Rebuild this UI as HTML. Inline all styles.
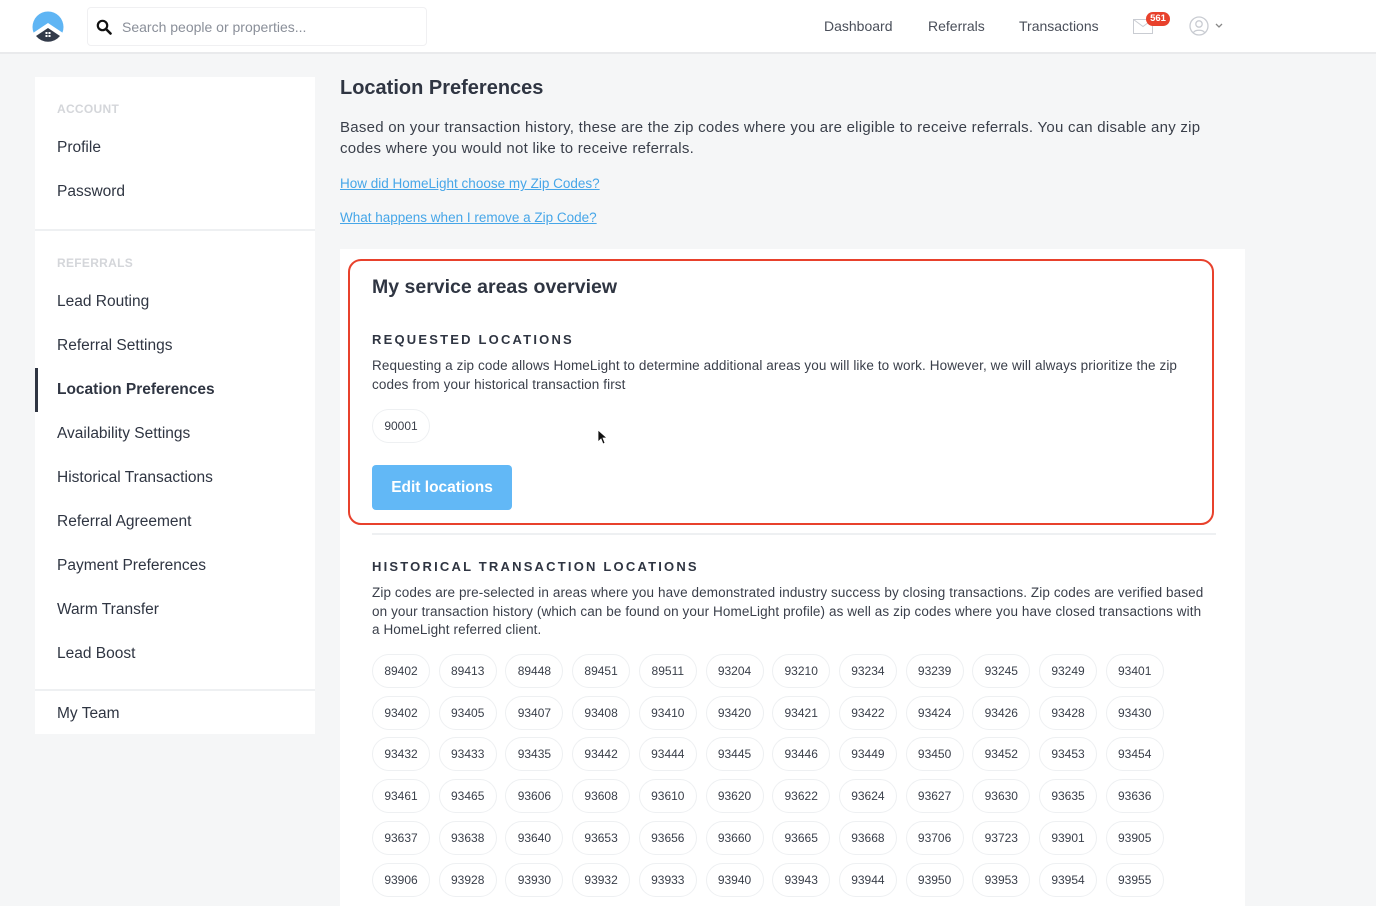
<!DOCTYPE html>
<html><head><meta charset="utf-8"><style>
*{box-sizing:border-box;margin:0;padding:0}
html,body{width:1376px;height:906px;overflow:hidden}
body{background:#f5f6f7;font-family:"Liberation Sans",sans-serif;color:#2f3542;position:relative}
.top{position:absolute;left:0;top:0;width:1376px;height:54px;background:#fff;border-bottom:2px solid #e9eaec}
.search{position:absolute;left:87px;top:7px;width:340px;height:39px;background:#fff;border:1px solid #f0f0f2;border-radius:4px}
.search span{position:absolute;left:34px;top:11px;font-size:14px;color:#8a8f99}
.nav{position:absolute;top:18px;font-size:14px;color:#4a4f5a}
.side{position:absolute;left:35px;top:77px;width:280px;height:657px;background:#fff}
.side .h{position:absolute;left:22px;font-size:12px;font-weight:bold;color:#d4d6da;letter-spacing:.3px}
.side .i{position:absolute;left:22px;font-size:15.5px;color:#2f3542}
.sep{position:absolute;left:0;width:280px;height:2px;background:#eef0f2}
.main h1{position:absolute;left:340px;top:77px;font-size:20px;font-weight:bold;color:#2f3542}
.p{position:absolute;left:340px;top:117px;width:890px;font-size:15px;line-height:21px;color:#3a3f4a;letter-spacing:.25px}
.lnk{position:absolute;left:340px;font-size:13.5px;color:#46a6e8;text-decoration:underline}
.card{position:absolute;left:340px;top:249px;width:905px;height:660px;background:#fff}
.red{position:absolute;left:348px;top:259px;width:866px;height:266px;border:2.5px solid #e8412c;border-radius:13px}
.lab{position:absolute;left:372px;font-size:13px;font-weight:bold;letter-spacing:2.2px;color:#2f3542}
.txt{position:absolute;left:372px;width:840px;font-size:13.5px;line-height:19px;color:#3a3f4a;letter-spacing:.1px}
.pill{position:absolute;width:58px;height:34px;border:1px solid #eef0f2;border-radius:17px;font-size:12px;color:#3a3f4a;text-align:center;line-height:32px;background:#fff}
.btn{position:absolute;left:372px;top:465px;width:140px;height:45px;background:#62b8f6;border-radius:4px;color:#fff;font-weight:bold;font-size:15.5px;text-align:center;line-height:45px}
</style></head><body>
<div class="top">
<svg style="position:absolute;left:32px;top:11px" width="32" height="32" viewBox="0 0 32 32"><circle cx="16" cy="16" r="15.5" fill="#5fb5f4"/><path d="M1 22 L16 12 L31 22 A15.5 15.5 0 0 1 1 22Z" fill="#fff"/><path d="M4 25 L16 17 L28 25 A15.5 15.5 0 0 1 4 25Z" fill="#333b4a"/><rect x="13.5" y="21" width="5" height="5" fill="#fff"/><path d="M16 21v5M13.5 23.5h5" stroke="#333b4a" stroke-width="1"/></svg>
<div class="search"><svg style="position:absolute;left:8px;top:11px" width="16" height="16" viewBox="0 0 16 16"><circle cx="6.5" cy="6.5" r="4.7" fill="none" stroke="#111" stroke-width="2.2"/><path d="M10 10l4.5 4.5" stroke="#111" stroke-width="2.6" stroke-linecap="round"/></svg><span>Search people or properties...</span></div>
<div class="nav" style="left:824px">Dashboard</div>
<div class="nav" style="left:928px">Referrals</div>
<div class="nav" style="left:1019px">Transactions</div>
<svg style="position:absolute;left:1133px;top:19px" width="20" height="15" viewBox="0 0 20 15"><rect x="0.5" y="0.5" width="19" height="14" fill="none" stroke="#c9ccd2"/><path d="M0.5 0.5l9.5 7 9.5-7" fill="none" stroke="#c9ccd2"/></svg>
<div style="position:absolute;left:1146px;top:12px;width:24px;height:14px;background:#e8412c;border-radius:7px;color:#fff;font-size:9.5px;font-weight:bold;text-align:center;line-height:14px">561</div>
<svg style="position:absolute;left:1189px;top:16px" width="20" height="20" viewBox="0 0 20 20"><circle cx="10" cy="10" r="9" fill="none" stroke="#c9ccd2" stroke-width="1.3"/><circle cx="10" cy="8" r="3.2" fill="none" stroke="#c9ccd2" stroke-width="1.3"/><path d="M4.5 16.5c1.5-3 9.5-3 11 0" fill="none" stroke="#c9ccd2" stroke-width="1.3"/></svg>
<svg style="position:absolute;left:1215px;top:23px" width="8" height="6" viewBox="0 0 8 6"><path d="M1 1l3 3 3-3" fill="none" stroke="#888" stroke-width="1.3"/></svg>
</div>
<div class="side">
<div class="h" style="top:25px">ACCOUNT</div>
<div class="i" style="top:62px">Profile</div>
<div class="i" style="top:106px">Password</div>
<div class="sep" style="top:152px"></div>
<div class="h" style="top:179px">REFERRALS</div>
<div class="i" style="top:216px">Lead Routing</div>
<div class="i" style="top:260px">Referral Settings</div>
<div style="position:absolute;left:0;top:291px;width:3px;height:44px;background:#2f3542"></div>
<div class="i" style="top:304px;font-weight:bold">Location Preferences</div>
<div class="i" style="top:348px">Availability Settings</div>
<div class="i" style="top:392px">Historical Transactions</div>
<div class="i" style="top:436px">Referral Agreement</div>
<div class="i" style="top:480px">Payment Preferences</div>
<div class="i" style="top:524px">Warm Transfer</div>
<div class="i" style="top:568px">Lead Boost</div>
<div class="sep" style="top:612px"></div>
<div class="i" style="top:628px">My Team</div>
</div>
<div class="main">
<h1>Location Preferences</h1>
<div class="p">Based on your transaction history, these are the zip codes where you are eligible to receive referrals. You can disable any zip codes where you would not like to receive referrals.</div>
<div class="lnk" style="top:176px">How did HomeLight choose my Zip Codes?</div>
<div class="lnk" style="top:210px">What happens when I remove a Zip Code?</div>
</div>
<div class="card"></div>
<div class="red"></div>
<div style="position:absolute;left:372px;top:276px;font-size:19.5px;font-weight:bold;color:#2f3542">My service areas overview</div>
<div class="lab" style="top:332px">REQUESTED LOCATIONS</div>
<div class="txt" style="top:356px;width:825px">Requesting a zip code allows HomeLight to determine additional areas you will like to work. However, we will always prioritize the zip codes from your historical transaction first</div>
<div class="pill" style="left:372px;top:409px">90001</div>
<div class="btn">Edit locations</div>
<svg style="position:absolute;left:597px;top:429px" width="10" height="16" viewBox="0 0 10 16"><path d="M1 1v12l3-3 2 5 2-1-2-5h4z" fill="#111" stroke="#fff" stroke-width="0.8"/></svg>
<div style="position:absolute;left:372px;top:533px;width:844px;height:2px;background:#eef0f2"></div>
<div class="lab" style="top:559px">HISTORICAL TRANSACTION LOCATIONS</div>
<div class="txt" style="top:584px;line-height:18.5px;width:838px">Zip codes are pre-selected in areas where you have demonstrated industry success by closing transactions. Zip codes are verified based on your transaction history (which can be found on your HomeLight profile) as well as zip codes where you have closed transactions with a HomeLight referred client.</div>
<div id="z"></div>
<script>
var z="89402 89413 89448 89451 89511 93204 93210 93234 93239 93245 93249 93401 93402 93405 93407 93408 93410 93420 93421 93422 93424 93426 93428 93430 93432 93433 93435 93442 93444 93445 93446 93449 93450 93452 93453 93454 93461 93465 93606 93608 93610 93620 93622 93624 93627 93630 93635 93636 93637 93638 93640 93653 93656 93660 93665 93668 93706 93723 93901 93905 93906 93928 93930 93932 93933 93940 93943 93944 93950 93953 93954 93955".split(" "),h="";
for(var i=0;i<72;i++){var r=Math.floor(i/12),c=i%12;h+='<div class="pill" style="left:'+(372+c*66.7)+'px;top:'+(654+r*41.7)+'px">'+z[i]+'</div>';}
document.getElementById("z").innerHTML=h;
</script>
</body></html>
